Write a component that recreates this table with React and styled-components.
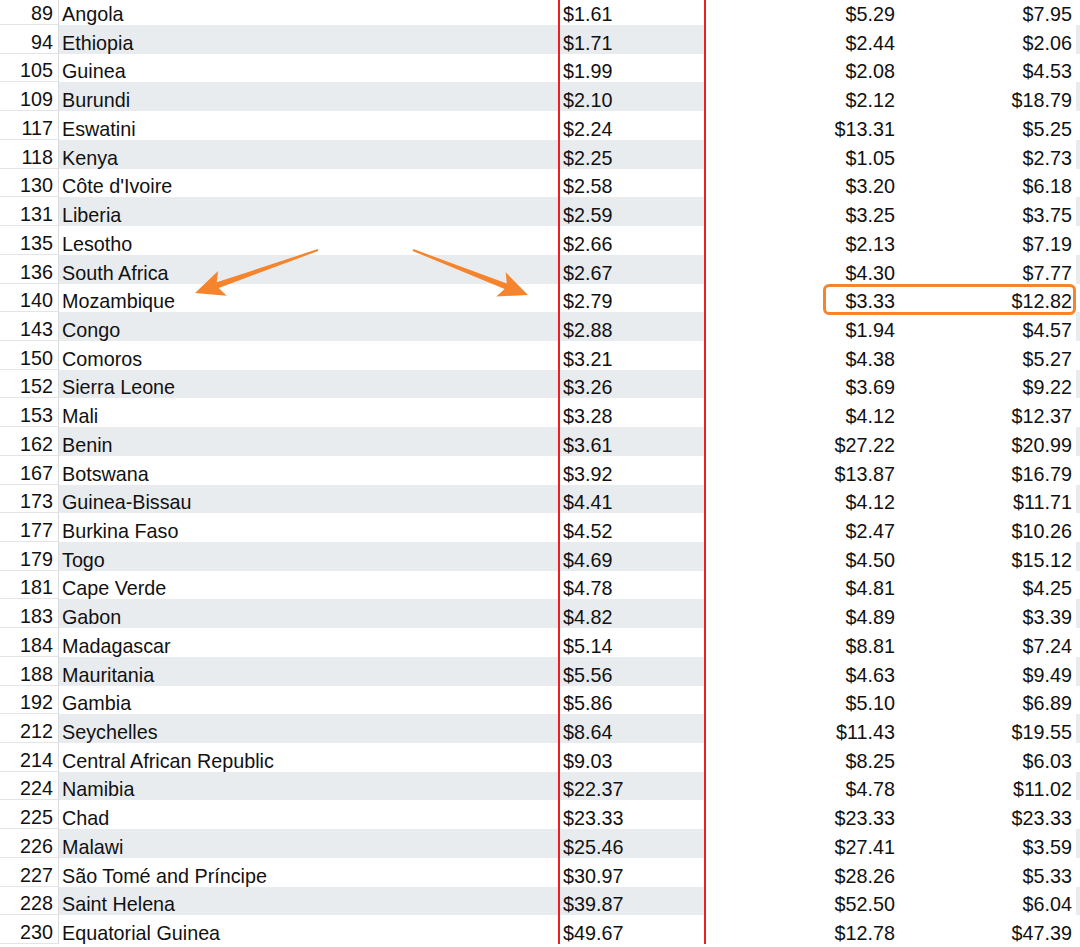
import React from "react";
import styled, { createGlobalStyle } from "styled-components";

const rows = [
  [89, "Angola", "$1.61", "$5.29", "$7.95"],
  [94, "Ethiopia", "$1.71", "$2.44", "$2.06"],
  [105, "Guinea", "$1.99", "$2.08", "$4.53"],
  [109, "Burundi", "$2.10", "$2.12", "$18.79"],
  [117, "Eswatini", "$2.24", "$13.31", "$5.25"],
  [118, "Kenya", "$2.25", "$1.05", "$2.73"],
  [130, "Côte d'Ivoire", "$2.58", "$3.20", "$6.18"],
  [131, "Liberia", "$2.59", "$3.25", "$3.75"],
  [135, "Lesotho", "$2.66", "$2.13", "$7.19"],
  [136, "South Africa", "$2.67", "$4.30", "$7.77"],
  [140, "Mozambique", "$2.79", "$3.33", "$12.82"],
  [143, "Congo", "$2.88", "$1.94", "$4.57"],
  [150, "Comoros", "$3.21", "$4.38", "$5.27"],
  [152, "Sierra Leone", "$3.26", "$3.69", "$9.22"],
  [153, "Mali", "$3.28", "$4.12", "$12.37"],
  [162, "Benin", "$3.61", "$27.22", "$20.99"],
  [167, "Botswana", "$3.92", "$13.87", "$16.79"],
  [173, "Guinea-Bissau", "$4.41", "$4.12", "$11.71"],
  [177, "Burkina Faso", "$4.52", "$2.47", "$10.26"],
  [179, "Togo", "$4.69", "$4.50", "$15.12"],
  [181, "Cape Verde", "$4.78", "$4.81", "$4.25"],
  [183, "Gabon", "$4.82", "$4.89", "$3.39"],
  [184, "Madagascar", "$5.14", "$8.81", "$7.24"],
  [188, "Mauritania", "$5.56", "$4.63", "$9.49"],
  [192, "Gambia", "$5.86", "$5.10", "$6.89"],
  [212, "Seychelles", "$8.64", "$11.43", "$19.55"],
  [214, "Central African Republic", "$9.03", "$8.25", "$6.03"],
  [224, "Namibia", "$22.37", "$4.78", "$11.02"],
  [225, "Chad", "$23.33", "$23.33", "$23.33"],
  [226, "Malawi", "$25.46", "$27.41", "$3.59"],
  [227, "São Tomé and Príncipe", "$30.97", "$28.26", "$5.33"],
  [228, "Saint Helena", "$39.87", "$52.50", "$6.04"],
  [230, "Equatorial Guinea", "$49.67", "$12.78", "$47.39"],
];

const STRIPE = "#e9ecef";
const RED = "#f01e24";
const ORANGE = "#f5842c";

const GlobalStyle = createGlobalStyle`
  html, body {
    margin: 0;
    padding: 0;
    min-height: 947px;
    background: #fff;
    overflow: hidden;
  }
  body {
    font-family: "Liberation Sans", Arial, sans-serif;
    color: #111;
  }
`;

const Sheet = styled.div`
  position: relative;
  width: 1080px;
  margin-top: -3.7px;
  padding-bottom: 6px;
`;

const Row = styled.div`
  display: grid;
  grid-template-columns: 59px 499px 148px 194px 176px 4px;
  height: 28.72px;
  font-size: 19.75px;
  line-height: 19px;
`;

const Cell = styled.div`
  display: flex;
  align-items: flex-end;
  padding-bottom: 1px;
  box-sizing: border-box;
  white-space: nowrap;
  background: ${(props) => (props.$striped ? STRIPE : "#fff")};
`;

const RankCell = styled(Cell)`
  justify-content: flex-end;
  padding-right: 5px;
  background: #fff;
  border-right: 1px solid #d8dadd;
  border-bottom: 1px solid #e2e4e7;
`;

const NameCell = styled(Cell)`
  padding-left: 3px;
`;

const PriceCell = styled(Cell)`
  padding-left: 3px;
  border-left: 2px solid ${RED};
  border-right: 2px solid ${RED};
`;

const ValueCell = styled(Cell)`
  justify-content: flex-end;
  padding-right: ${(props) => props.$pad}px;
  background: #fff;
`;

const Filler = styled(Cell)``;

const Highlight = styled.div`
  position: absolute;
  left: 823px;
  top: 287.5px;
  width: 253px;
  height: 31px;
  box-sizing: border-box;
  border: 3px solid ${ORANGE};
  border-radius: 6px;
  pointer-events: none;
`;

const Arrows = styled.svg`
  position: absolute;
  left: 0;
  top: 3.7px;
  width: 1080px;
  height: 400px;
  pointer-events: none;
`;

export default function App() {
  return (
    <>
      <GlobalStyle />
      <Sheet>
        {rows.map(([rank, name, price, a, b], i) => {
          const striped = i % 2 === 1;
          return (
            <Row key={rank}>
              <RankCell>{rank}</RankCell>
              <NameCell $striped={striped}>{name}</NameCell>
              <PriceCell $striped={striped}>{price}</PriceCell>
              <ValueCell $pad={5}>{a}</ValueCell>
              <ValueCell $pad={4}>{b}</ValueCell>
              <Filler $striped={striped} />
            </Row>
          );
        })}
        <Highlight />
        <Arrows viewBox="0 0 1080 400">
          <polygon
            fill={ORANGE}
            points="317.7,249.1 216.7,282.3 218.1,271.1 195,293 226.7,295.7 218.7,287.9 318.3,250.9"
          />
          <polygon
            fill={ORANGE}
            points="413.4,249.1 506.8,283.5 505.7,272.3 528,295 496.3,296.5 504.6,289.1 412.6,250.9"
          />
        </Arrows>
      </Sheet>
    </>
  );
}
